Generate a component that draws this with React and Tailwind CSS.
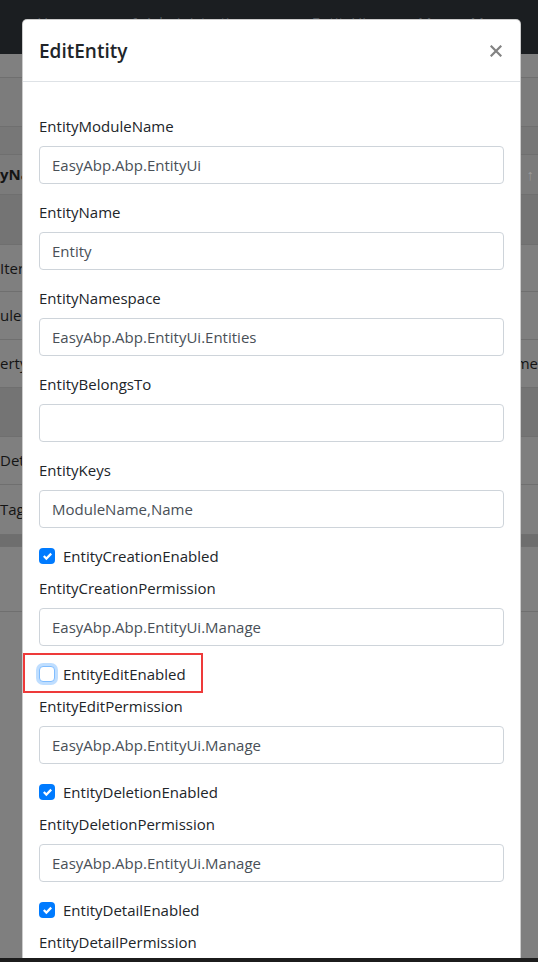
import React from "react";

const font = { fontFamily: '"Open Sans", "Noto Sans", sans-serif' };

function Field({ label, value, noInput }) {
  return (
    <div className="mb-4">
      <div className="mb-2 text-[15px] leading-6 text-[#212529]">{label}</div>
      {!noInput && (
        <div className="flex h-[38px] items-center rounded-[4px] border border-[#ced4da] px-3 text-[15px] text-[#495057]">
          {value}
        </div>
      )}
    </div>
  );
}

function Check({ label, checked }) {
  return (
    <div className="mb-2 flex h-6 items-center">
      {checked ? (
        <span className="flex h-4 w-4 items-center justify-center rounded-[4px] bg-[#007bff]">
          <svg width="9" height="9" viewBox="0 0 8 8">
            <path fill="#fff" d="M6.564.75l-3.59 3.612-1.538-1.55L0 4.26 2.974 7.25 8 2.193z" />
          </svg>
        </span>
      ) : (
        <span className="h-4 w-4 rounded-[4px] border border-[#80bdff] bg-white shadow-[0_0_0_3px_rgba(0,123,255,0.25)]" />
      )}
      <span className="ml-2 text-[15px] leading-6 text-[#212529]">{label}</span>
    </div>
  );
}

const rows = [
  { h: 24, bg: "bg-[#808080]" },
  { h: 49, bg: "bg-[#7c7c7c]" },
  { h: 28, bg: "bg-[#777777]" },
  { h: 40, bg: "bg-[#7b7b7b]", left: "yNa", bold: true, right: "↑" },
  { h: 50, bg: "bg-[#747474]" },
  { h: 47, bg: "bg-[#7f7f7f]", left: "Iter" },
  { h: 48, bg: "bg-[#7f7f7f]", left: "ule" },
  { h: 48, bg: "bg-[#7f7f7f]", left: "erty", right: "me" },
  { h: 49, bg: "bg-[#747474]" },
  { h: 48, bg: "bg-[#7f7f7f]", left: "Det" },
  { h: 50, bg: "bg-[#7f7f7f]", left: "Tag" },
  { h: 12, bg: "bg-[#6e6e6e]" },
  { h: 65, bg: "bg-[#808080]" },
];

export default function App() {
  return (
    <div className="relative h-[962px] w-[538px] overflow-hidden bg-[#7f7f7f]" style={font}>
      {/* background page (dimmed) */}
      <div className="flex h-[54px] items-start bg-[#1b1e21] pt-[10px] text-[15px] leading-6 text-[#4e5358]">
        <span className="ml-[22px] w-[12px]">⌂</span>
        <span className="ml-[4px]">Home</span>
        <span className="ml-[50px]">ƒ</span>
        <span className="ml-[6px]">Administration</span>
        <span className="ml-[64px]">EntityUi</span>
        <span className="ml-[52px]">Menu</span>
        <span className="ml-[12px]">My Search</span>
      </div>
      <div className="flex flex-col">
        {rows.map((r, i) => (
          <div
            key={i}
            className={`flex items-center justify-between border-b border-[#6f6f6f] text-[15px] text-[#141414] ${r.bg}`}
            style={{ height: r.h }}
          >
            <span className={r.bold ? "font-bold" : ""}>{r.left || ""}</span>
            <span className={r.right === "↑" ? "mr-[4px] text-[#9a9a9a]" : ""}>{r.right || ""}</span>
          </div>
        ))}
      </div>

      {/* modal */}
      <div className="absolute left-[22px] top-[19px] w-[499px] rounded-t-[5px] border border-[rgba(0,0,0,0.2)] bg-white">
        <div className="flex h-[62px] items-center justify-between border-b border-[#dee2e6] px-4">
          <div className="text-[19px] font-semibold leading-[30px] text-[#212529]">EditEntity</div>
          <svg width="12" height="12" viewBox="0 0 12 12" className="mr-[2px]">
            <path d="M1.5 1.5 L10.5 10.5 M10.5 1.5 L1.5 10.5" stroke="#828282" strokeWidth="2.2" strokeLinecap="square" />
          </svg>
        </div>
        <div className="px-4 pt-[32px] pb-8">
          <Field label="EntityModuleName" value="EasyAbp.Abp.EntityUi" />
          <Field label="EntityName" value="Entity" />
          <Field label="EntityNamespace" value="EasyAbp.Abp.EntityUi.Entities" />
          <Field label="EntityBelongsTo" value="" />
          <Field label="EntityKeys" value="ModuleName,Name" />
          <Check label="EntityCreationEnabled" checked />
          <Field label="EntityCreationPermission" value="EasyAbp.Abp.EntityUi.Manage" />
          <Check label="EntityEditEnabled" checked={false} />
          <Field label="EntityEditPermission" value="EasyAbp.Abp.EntityUi.Manage" />
          <Check label="EntityDeletionEnabled" checked />
          <Field label="EntityDeletionPermission" value="EasyAbp.Abp.EntityUi.Manage" />
          <Check label="EntityDetailEnabled" checked />
          <Field label="EntityDetailPermission" noInput />
        </div>
      </div>

      {/* annotation box */}
      <div className="absolute left-[23px] top-[653px] h-[40px] w-[180px] border-2 border-[#ee3a3a]" />

      {/* bottom dark strip */}
      <div className="absolute bottom-0 left-0 h-[4px] w-full bg-[#1c1c1c]" />
    </div>
  );
}
